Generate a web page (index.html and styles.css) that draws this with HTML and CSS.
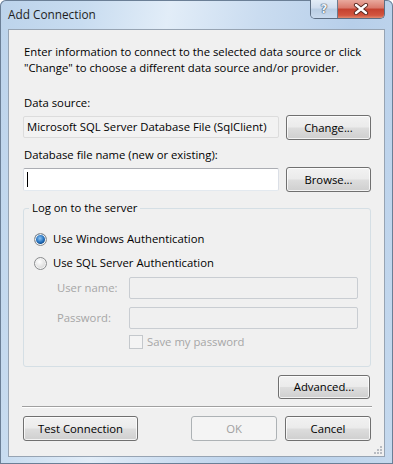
FILE: index.html
```html
<!DOCTYPE html>
<html>
<head>
<meta charset="utf-8">
<link rel="stylesheet" href="styles.css">
</head>
<body>
<div class="window">
  <div class="titlebar">
    <span class="title">Add Connection</span>
    <div class="caption-btns">
      <div class="cap help"><span class="q">?</span></div>
      <div class="cap close">
        <svg width="16" height="12" viewBox="0 0 16 12">
          <path d="M3 2 L13 10 M13 2 L3 10" stroke="#5a2a22" stroke-width="4.2" stroke-linecap="round"/>
          <path d="M3 2 L13 10 M13 2 L3 10" stroke="#ffffff" stroke-width="2.4" stroke-linecap="round"/>
        </svg>
      </div>
    </div>
  </div>
  <div class="client">
    <p class="intro">Enter information to connect to the selected data source or click<br>"Change" to choose a different data source and/or provider.</p>
    <div class="lbl lbl-ds">Data source:</div>
    <div class="row">
      <div class="readonly">Microsoft SQL Server Database File (SqlClient)</div>
      <div class="btn">Change...</div>
    </div>
    <div class="lbl lbl-file">Database file name (new or existing):</div>
    <div class="row">
      <div class="input"><span class="caret"></span></div>
      <div class="btn">Browse...</div>
    </div>
    <div class="group">
      <div class="legend">Log on to the server</div>
      <div class="opt opt-first"><span class="radio checked"></span><span>Use Windows Authentication</span></div>
      <div class="opt opt-second"><span class="radio"></span><span>Use SQL Server Authentication</span></div>
      <div class="cred cred-user"><span class="cred-lbl">User name:</span><div class="dis-input"></div></div>
      <div class="cred cred-pass"><span class="cred-lbl">Password:</span><div class="dis-input"></div></div>
      <div class="save"><span class="check"></span><span>Save my password</span></div>
    </div>
    <div class="adv-row"><div class="btn btn-adv">Advanced...</div></div>
    <div class="sep"></div>
    <div class="footer">
      <div class="btn btn-test">Test Connection</div>
      <div class="btn btn-ok disabled">OK</div>
      <div class="btn btn-cancel">Cancel</div>
    </div>
    <div class="grip">
      <svg width="10" height="10" viewBox="0 0 10 10">
        <g fill="#b8bcc2">
          <rect x="7" y="1" width="2" height="2"/>
          <rect x="4" y="4" width="2" height="2"/><rect x="7" y="4" width="2" height="2"/>
          <rect x="1" y="7" width="2" height="2"/><rect x="4" y="7" width="2" height="2"/><rect x="7" y="7" width="2" height="2"/>
        </g>
      </svg>
    </div>
  </div>
</div>
</body>
</html>
```

FILE: styles.css
```css
* { box-sizing: border-box; }
html, body { margin: 0; padding: 0; }
body {
  width: 393px;
  height: 464px;
  overflow: hidden;
  font-family: "Open Sans", "Noto Sans", sans-serif;
  font-size: 11.3px;
  color: #000;
  white-space: nowrap;
}
.window {
  width: 393px;
  height: 464px;
  display: flex;
  flex-direction: column;
  padding: 0 8px 7px 8px;
  background: linear-gradient(100deg, #bcd3eb 0%, #c8dcf0 18%, #e2edf8 36%, #cadcf0 55%, #b7cfea 75%, #c5d9ee 100%);
  border-radius: 6px 6px 0 0;
  box-shadow: inset 0 0 0 1px #6b7f96;
}
.titlebar {
  height: 29px;
  flex: none;
  display: flex;
  justify-content: space-between;
  align-items: flex-start;
}
.title {
  margin-top: 5px;
  line-height: 18px;
  font-size: 11.8px;
  color: #1e1e1e;
}
.caption-btns {
  display: flex;
  height: 19px;
  border: 1px solid #5d6e83;
  border-top: none;
  border-radius: 0 0 5px 5px;
  overflow: hidden;
}
.cap {
  height: 18px;
  display: flex;
  align-items: center;
  justify-content: center;
}
.help {
  width: 27px;
  background: linear-gradient(#e3ecf6 0%, #cfdced 45%, #b9cde3 50%, #c9daee 100%);
  border-right: 1px solid #6b7b8f;
}
.q {
  font-family: "DejaVu Sans", sans-serif;
  font-weight: bold;
  font-size: 12px;
  line-height: 12px;
  color: #eef3f9;
  text-shadow: 0 0 1px #3b4a5c, 0 0 1px #3b4a5c, 0 0 1px #3b4a5c;
}
.close {
  width: 46px;
  background: linear-gradient(#e9a99d 0%, #d9786a 45%, #c4412f 50%, #d2553f 85%, #e08a6f 100%);
}
.client {
  flex: 1;
  position: relative;
  background: #f0f0f0;
  border: 1px solid #97a4b3;
  padding: 0 13px 0 14px;
  display: flex;
  flex-direction: column;
}
.intro {
  margin: 14px 0 0 1px;
  line-height: 16px;
}
.lbl { line-height: 16px; margin-left: 1px; }
.lbl-ds { margin-top: 19px; }
.lbl-file { margin-top: 7px; }
.row {
  margin-top: 4px;
  height: 25px;
  display: flex;
  align-items: center;
  gap: 7px;
}
.readonly {
  width: 256px;
  height: 22px;
  border: 1px solid #dcdcdc;
  border-radius: 2px;
  background: #f2f2f2;
  padding-left: 3px;
  line-height: 20px;
  margin-top: -2px;
  overflow: hidden;
}
.input {
  width: 256px;
  height: 23px;
  border: 1px solid #dbdfe6;
  border-top-color: #abadb3;
  border-bottom-color: #e3e9ef;
  border-radius: 2px;
  background: #fff;
  display: flex;
  align-items: center;
  padding-left: 3px;
}
.caret {
  width: 1px;
  height: 15px;
  background: #000;
}
.btn {
  width: 85px;
  height: 25px;
  display: flex;
  align-items: center;
  justify-content: center;
  border: 1px solid #707070;
  border-radius: 3px;
  background: linear-gradient(#f2f2f2 0%, #ebebeb 48%, #dddddd 52%, #cfcfcf 100%);
  box-shadow: inset 0 0 0 1px rgba(255,255,255,0.75);
  line-height: 16px;
}
.group {
  margin-top: 16px;
  border: 1px solid #d5dfe5;
  border-radius: 3px;
  padding: 0 12px 16px 10px;
  display: flex;
  flex-direction: column;
}
.legend {
  margin-top: -9px;
  margin-left: -5px;
  padding: 0 3px;
  align-self: flex-start;
  background: #f0f0f0;
  line-height: 16px;
}
.opt {
  display: flex;
  align-items: center;
  gap: 6px;
  line-height: 16px;
}
.opt-first { margin-top: 15px; }
.opt-second { margin-top: 8px; }
.radio {
  width: 13px;
  height: 13px;
  border-radius: 50%;
  border: 1px solid #8a8c8e;
  background: radial-gradient(circle at 40% 35%, #ffffff 0%, #e6e6e6 45%, #c8c8c8 100%);
  box-shadow: inset 0 0 0 1px #f4f4f4;
  flex: none;
}
.radio.checked {
  background:
    radial-gradient(circle at 45% 40%, #8fc5f2 0%, #2b78c4 40%, #0e4a8c 62%, transparent 66%),
    radial-gradient(circle at 40% 35%, #ffffff 0%, #e6e6e6 45%, #c8c8c8 100%);
}
.cred {
  display: flex;
  align-items: center;
  padding-left: 23px;
}
.cred-user { margin-top: 6px; }
.cred-pass { margin-top: 8px; }
.cred-lbl {
  width: 72px;
  color: #a6a6a6;
  line-height: 16px;
}
.dis-input {
  flex: 1;
  height: 22px;
  border: 1px solid #c9cdd2;
  border-radius: 2px;
  background: #f0f0f0;
}
.save {
  margin-top: 5px;
  margin-left: 95px;
  display: flex;
  align-items: center;
  gap: 4px;
  color: #a6a6a6;
  line-height: 16px;
}
.check {
  width: 14px;
  height: 14px;
  border: 1px solid #c4c8cc;
  background: #f4f4f4;
}
.adv-row {
  margin-top: 8px;
  display: flex;
  justify-content: flex-end;
}
.btn-adv { width: 92px; height: 24px; margin-right: 1px; }
.sep {
  margin-top: 7px;
  height: 2px;
  border-top: 1px solid #a0a0a0;
  border-bottom: 1px solid #ffffff;
  margin-left: -1px;
  margin-right: -1px;
}
.footer {
  margin-top: 8px;
  display: flex;
  gap: 8px;
}
.btn-test { width: 115px; }
.btn-ok { width: 86px; margin-left: auto; }
.btn-cancel { width: 86px; }
.btn.disabled {
  border-color: #adb2b5;
  background: #f4f4f4;
  box-shadow: none;
  color: #a0a0a0;
}
.grip {
  position: absolute;
  right: 1px;
  bottom: 1px;
  width: 10px;
  height: 10px;
}
.grip svg { display: block; }
```
